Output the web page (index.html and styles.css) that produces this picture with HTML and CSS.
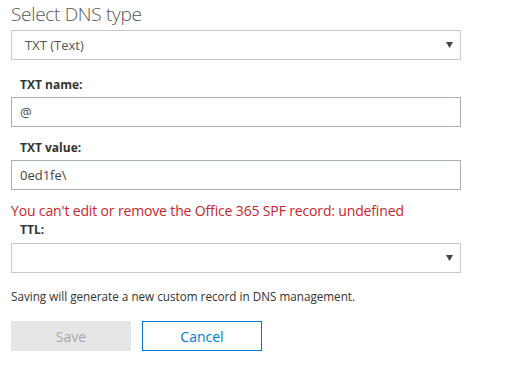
FILE: index.html
```html
<!DOCTYPE html>
<html>
    <head>
        <meta charset="UTF-8">
        <meta name="viewport" content="width=device-width, initial-scale=1.0">
        <title>Add DNS record</title>
        <link rel="stylesheet" href="styles.css">
    </head>

    <body>
        <div id="panel">
            <h2 class="title">Select DNS type</h2>
            <div class="select">
                <span class="select-text">TXT (Text)</span>
                <svg class="arrow" width="7" height="6" viewBox="0 0 7 6"><path d="M0 0H7L3.5 6Z" fill="#444"/></svg>
            </div>

            <label class="field-label" for="txtName">TXT name:</label>
            <input class="text-input" type="text" id="txtName" value="@">

            <label class="field-label after-input" for="txtValue">TXT value:</label>
            <input class="text-input" type="text" id="txtValue" value="0ed1fe\">

            <div class="error">You can't edit or remove the Office 365 SPF record: undefined</div>

            <label class="field-label ttl-label">TTL:</label>
            <div class="select">
                <span class="select-text"></span>
                <svg class="arrow" width="7" height="6" viewBox="0 0 7 6"><path d="M0 0H7L3.5 6Z" fill="#444"/></svg>
            </div>

            <p class="note">Saving will generate a new custom record in DNS management.</p>

            <div class="actions">
                <button class="btn btn-save" disabled>Save</button>
                <button class="btn btn-cancel">Cancel</button>
            </div>
        </div>
    </body>
</html>
```

FILE: styles.css
```css
body {
    font-family: 'Segoe UI', 'Open Sans', 'Noto Sans', sans-serif;
    background: #fff;
    color: #333;
    margin: 0;
    padding: 0;
}
#panel {
    width: 450px;
    padding: 0 0 0 11px;
}
.title {
    font-size: 19px;
    font-weight: 300;
    letter-spacing: -0.3px;
    color: #555;
    line-height: 28px;
    margin: 0 0 2px 0;
}
.select {
    height: 30px;
    box-sizing: border-box;
    border: 1px solid #c8c8c8;
    display: flex;
    justify-content: space-between;
    align-items: center;
    padding: 0 7px 0 13px;
}
.select-text {
    font-size: 13px;
    color: #555;
}
.field-label {
    display: block;
    font-size: 12px;
    font-weight: bold;
    color: #333;
    line-height: 16px;
    padding-left: 9px;
    margin: 17px 0 4px 0;
}
.after-input {
    margin-top: 13px;
}
.text-input {
    display: block;
    width: 100%;
    height: 30px;
    box-sizing: border-box;
    border: 1px solid #a6b0b0;
    padding: 0 8px;
    font-family: inherit;
    font-size: 13px;
    color: #444;
    margin: 0;
}
.error {
    color: #c4262e;
    font-size: 14px;
    letter-spacing: -0.15px;
    line-height: 20px;
    margin-top: 11px;
}
.ttl-label {
    margin-top: 1px;
    margin-bottom: 5px;
}
.note {
    font-size: 11.7px;
    color: #333;
    line-height: 16px;
    margin: 15px 0 0 0;
}
.actions {
    display: flex;
    gap: 11px;
    margin-top: 17px;
}
.btn {
    width: 120px;
    height: 30px;
    font-family: inherit;
    font-size: 14px;
    background: #fff;
    border: 1px solid #0078d7;
    color: #0078d7;
    padding: 0;
}
.btn-save {
    background: #e6e6e6;
    border-color: #e6e6e6;
    color: #a6a6a6;
}
```
